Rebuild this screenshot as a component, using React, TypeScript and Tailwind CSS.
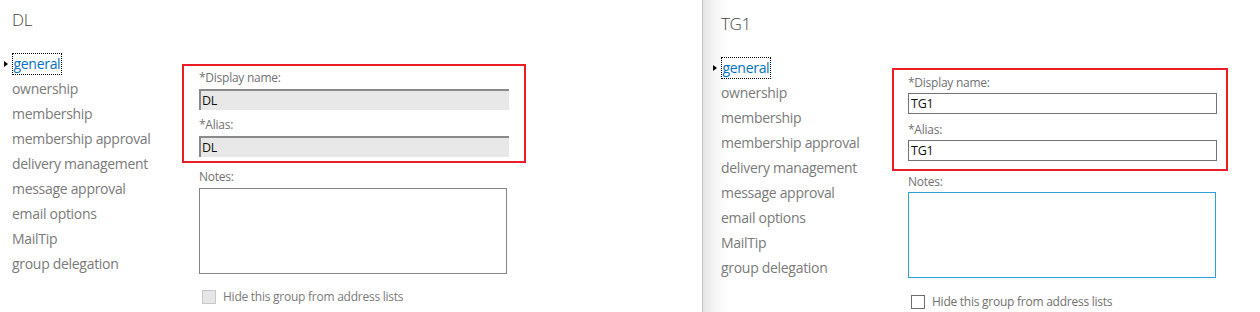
import React from 'react'

const navItems = [
  'general',
  'ownership',
  'membership',
  'membership approval',
  'delivery management',
  'message approval',
  'email options',
  'MailTip',
  'group delegation',
]

interface PanelProps {
  title: string
  value: string
}

function Nav() {
  return (
    <div className="w-[187px] shrink-0 text-[14px] tracking-[-0.3px] text-[#7a7a7a]">
      {navItems.map((item, i) => (
        <div key={item} className="h-[25px] flex items-center">
          {i === 0 ? (
            <span className="relative inline-block border border-dotted border-black leading-[20px] px-[0.5px] text-[#0072c6]">
              <span className="absolute left-[-9px] top-[7px] w-0 h-0 border-y-[3.5px] border-y-transparent border-l-[4px] border-l-black" />
              {item}
            </span>
          ) : (
            item
          )}
        </div>
      ))}
    </div>
  )
}

function TextField({ value, disabled, width }: { value: string; disabled?: boolean; width: string }) {
  return (
    <input
      readOnly
      value={value}
      className={
        disabled
          ? `block h-[21px] ${width} bg-[#e8e8e8] border-t-2 border-l-2 border-t-[#8a8a8a] border-l-[#8a8a8a] pl-[1px] text-[12.5px] text-[#111] outline-none`
          : `block h-[21px] ${width} bg-white border border-[#737373] pl-[2px] text-[12.5px] text-[#111] outline-none`
      }
    />
  )
}

function LeftPanel({ title, value }: PanelProps) {
  return (
    <div className="w-[702px] shrink-0 pl-[12px] pt-[8px] bg-white">
      <div className="h-[24px] leading-[24px] text-[17px] font-light text-[#444] tracking-[-0.3px]">{title}</div>
      <div className="flex mt-[19px]">
        <Nav />
        <div className="mt-[13px] text-[12px] tracking-[-0.25px] text-[#717171]">
          <div className="-ml-[17px] w-[344px] border-2 border-[#ec1c24] pt-[4px] pb-[4px] pl-[15px]">
            <div className="leading-[16px]">*Display name:</div>
            <div className="mt-[3px]">
              <TextField value={value} disabled width="w-[310px]" />
            </div>
            <div className="mt-[7px] leading-[16px]">*Alias:</div>
            <div className="mt-[3px]">
              <TextField value={value} disabled width="w-[310px]" />
            </div>
          </div>
          <div className="mt-[6px] leading-[16px]">Notes:</div>
          <textarea
            readOnly
            className="block mt-[3px] w-[308px] h-[86px] border border-[#858585] bg-white resize-none outline-none"
          />
          <label className="mt-[14px] flex items-center gap-[7px] text-[#7a7a7a]">
            <span className="ml-[3px] w-[14px] h-[14px] bg-[#e6e6e6] border border-[#c8c8c8]" />
            Hide this group from address lists
          </label>
        </div>
      </div>
    </div>
  )
}

function RightPanel({ title, value }: PanelProps) {
  return (
    <div className="flex-1 border-l border-[#c4c4c4] bg-[linear-gradient(to_right,#e4e4e4,#f6f6f6_12px,#ffffff_26px)] pl-[18px] pt-[12px]">
      <div className="h-[24px] leading-[24px] text-[17px] font-light text-[#444] tracking-[-0.3px]">{title}</div>
      <div className="flex mt-[19px]">
        <Nav />
        <div className="mt-[13px] text-[12px] tracking-[-0.25px] text-[#717171]">
          <div className="-ml-[16px] w-[336px] border-2 border-[#ec1c24] pt-[5px] pb-[8px] pl-[14px]">
            <div className="leading-[16px]">*Display name:</div>
            <div className="mt-[2px]">
              <TextField value={value} width="w-[309px]" />
            </div>
            <div className="mt-[8px] leading-[16px]">*Alias:</div>
            <div className="mt-[2px]">
              <TextField value={value} width="w-[309px]" />
            </div>
          </div>
          <div className="mt-[3px] leading-[16px]">Notes:</div>
          <textarea
            readOnly
            className="block mt-[2px] w-[308px] h-[86px] border border-[#2ba0d9] bg-white resize-none outline-none"
          />
          <label className="mt-[15px] flex items-center gap-[7px] text-[#717171]">
            <span className="ml-[3px] w-[14px] h-[14px] bg-white border border-[#6e6e6e]" />
            Hide this group from address lists
          </label>
        </div>
      </div>
    </div>
  )
}

export default function App() {
  return (
    <div className="w-[1260px] h-[312px] flex overflow-hidden bg-white font-['Open_Sans','Noto_Sans',sans-serif]">
      <LeftPanel title="DL" value="DL" />
      <RightPanel title="TG1" value="TG1" />
    </div>
  )
}
